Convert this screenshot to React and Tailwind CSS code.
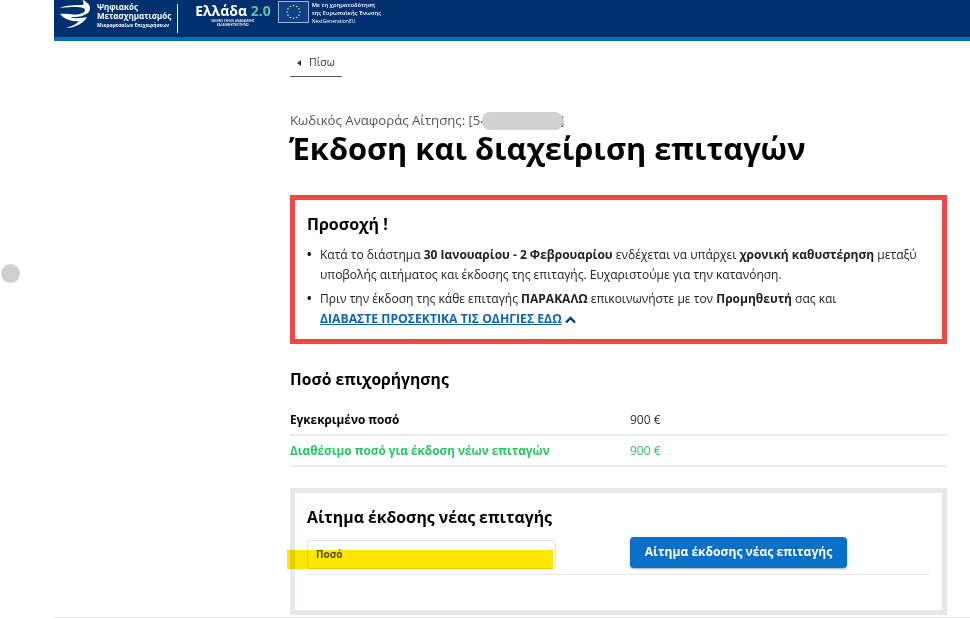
import React from "react";

const Stars = () => {
  const dots = Array.from({ length: 12 }, (_, i) => {
    const a = (i * Math.PI) / 6;
    return <circle key={i} cx={16 + 7 * Math.cos(a)} cy={11 + 7 * Math.sin(a)} r="0.9" fill="#e8d44a" />;
  });
  return (
    <svg width="31" height="22" viewBox="0 0 32 22" className="bg-[#0d3f8c] border border-[#9fb4d4]">
      {dots}
    </svg>
  );
};

const Swoosh = () => (
  <svg width="32" height="30" viewBox="0 0 32 30" fill="#fff">
    <path d="M22 0c4 3 8 5 8 9 0 7-8 8-14 7 4-1 9-2 9-5 0-3-8-4-25-2 5-3 17-3 22-3 2 0 2-3 0-6z" />
    <path d="M0 15c6-1 15 1 24 1-3 2-9 2-14 2 5 2 12 1 17 0-3 6-12 11-21 11 6-2 11-4 13-7-7 1-15-2-19-7z" />
  </svg>
);

const Header = () => (
  <header className="ml-[54px] h-[41px] bg-[#00306f] flex flex-col overflow-hidden">
    <div className="h-[37px] flex items-center pl-[6px] text-white font-['Open_Sans',sans-serif]">
      <div className="-mt-[9px]">
        <Swoosh />
      </div>
      <div className="ml-[5px] -mt-[7px] font-bold leading-[9.5px]">
        <div className="text-[8px]">Ψηφιακός</div>
        <div className="text-[8px]">Μετασχηματισμός</div>
        <div className="text-[4.8px] leading-[8px]">Μικρομεσαίων Επιχειρήσεων</div>
      </div>
      <div className="w-px h-[29px] bg-white ml-[6px]" />
      <div className="ml-[17px] -mt-[8px] flex flex-col items-center">
        <div className="text-[14px] font-bold leading-[16px] whitespace-nowrap">
          Ελλάδα <span className="text-[#5cc4a6]">2.0</span>
        </div>
        <div className="text-[3px] font-semibold leading-[4px] text-center">
          ΕΘΝΙΚΟ ΣΧΕΔΙΟ ΑΝΑΚΑΜΨΗΣ
          <br />
          ΚΑΙ ΑΝΘΕΚΤΙΚΟΤΗΤΑΣ
        </div>
      </div>
      <div className="ml-[7px] -mt-[13px]">
        <Stars />
      </div>
      <div className="ml-[3px] -mt-[12px] font-semibold text-[5.8px] leading-[8px] whitespace-nowrap">
        <div>Με τη χρηματοδότηση</div>
        <div>της Ευρωπαϊκής Ένωσης</div>
        <div className="font-normal text-[5px]">NextGenerationEU</div>
      </div>
    </div>
    <div className="h-[4px] bg-[#0a6eb4]" />
  </header>
);

const Row = ({ label, value, green }) => (
  <div className={`flex items-center h-[31px] border-b-2 border-[#ebebeb] text-[12px] ${green ? "text-[#28c765]" : "text-black"}`}>
    <div className="w-[340px] font-bold text-[11.8px]">{label}</div>
    <div className={green ? "" : "text-[#333]"}>{value}</div>
  </div>
);

export default function App() {
  return (
    <div className="relative h-[619px] overflow-hidden bg-white font-['Open_Sans',sans-serif] text-black">
      <Header />

      {/* stray dot at the left edge */}
      <div className="absolute left-[1px] top-[264px] w-[19px] h-[19px] rounded-full bg-[#cfcfcf]" />

      <main className="ml-[290px] w-[657px]">
        <a className="mt-[9px] w-[52px] h-[27px] flex items-center justify-center gap-[8px] border-b border-[#555] text-[10.5px] text-[#333]">
          <svg width="4" height="6" viewBox="0 0 4 6" fill="#333">
            <path d="M4 0v6L0 3z" />
          </svg>
          Πίσω
        </a>

        <div className="relative mt-[34px] text-[13.2px] leading-[18px] text-[#555] whitespace-nowrap">
          Κωδικός Αναφοράς Αίτησης: [54
          <span className="inline-block w-[72px]" />]
          <div className="absolute left-[192px] top-[1px] w-[81px] h-[18px] rounded-[8px] bg-[#d2d2d2]" />
        </div>
        <h1 className="-ml-[1px] -mt-[3px] text-[30.8px] leading-[44px] font-bold whitespace-nowrap">
          Έκδοση και διαχείριση επιταγών
        </h1>

        <section className="mt-[25px] h-[149px] border-[5px] border-[#f04848] pl-[12px] pr-[16px] pt-[12px]">
          <h2 className="text-[16px] leading-[24px] font-bold">Προσοχή !</h2>
          <ul className="mt-[9px] text-[12px] leading-[19.5px] text-[#222]">
            <li className="flex">
              <span className="w-[13px] shrink-0 text-black font-bold">•</span>
              <span>
                Κατά το διάστημα <b>30 Ιανουαρίου - 2 Φεβρουαρίου</b> ενδέχεται να υπάρχει{" "}
                <b>χρονική καθυστέρηση</b> μεταξύ υποβολής αιτήματος και έκδοσης της επιταγής. Ευχαριστούμε για την
                κατανόηση.
              </span>
            </li>
            <li className="flex mt-[5px]">
              <span className="w-[13px] shrink-0 text-black font-bold">•</span>
              <span>
                Πριν την έκδοση της κάθε επιταγής <b>ΠΑΡΑΚΑΛΩ</b> επικοινωνήστε με τον <b>Προμηθευτή</b> σας και
                <br />
                <a className="font-bold text-[12.2px] text-[#0b66b8] underline">ΔΙΑΒΑΣΤΕ ΠΡΟΣΕΚΤΙΚΑ ΤΙΣ ΟΔΗΓΙΕΣ ΕΔΩ</a>
                <svg className="inline-block ml-[3px] align-[-1px]" width="11" height="8" viewBox="0 0 11 8" fill="none">
                  <path d="M1 6.5l4.500-4.500 4.500 4.500" stroke="#063a7c" strokeWidth="2.4" />
                </svg>
              </span>
            </li>
          </ul>
        </section>

        <h2 className="mt-[23px] text-[15.7px] leading-[24px] font-bold">Ποσό επιχορήγησης</h2>
        <div className="mt-[14px]">
          <Row label="Εγκεκριμένο ποσό" value="900 €" />
          <Row label="Διαθέσιμο ποσό για έκδοση νέων επιταγών" value="900 €" green />
        </div>

        <section className="mt-[21px] h-[127px] border-[5px] border-[#e6e6ec] px-[12px] pt-[12px]">
          <h2 className="text-[15.8px] leading-[24px] font-bold">Αίτημα έκδοσης νέας επιταγής</h2>
          <div className="mt-[11px] pb-[5px] flex items-start border-b border-[#e9e9e9]">
            <div className="w-[249px] h-[29px] border border-[#e4e4e4] rounded-[3px] pl-[8px] text-[10px] leading-[26px] font-bold text-[#555]">
              Ποσό
            </div>
            <button className="ml-[74px] -mt-[3px] w-[217px] h-[31px] rounded-[4px] bg-[#0870c6] shadow-[0_1px_2px_rgba(0,0,0,0.35)] text-white text-[12.1px] font-bold">
              Αίτημα έκδοσης νέας επιταγής
            </button>
          </div>
        </section>
      </main>

      {/* highlighter mark over the amount field */}
      <div className="absolute left-[287px] top-[550px] w-[266px] h-[19px] bg-[#ffe600] mix-blend-multiply" />

      <div className="absolute left-[54px] right-0 top-[617px] h-px bg-[#e5e5e5]" />
    </div>
  );
}
